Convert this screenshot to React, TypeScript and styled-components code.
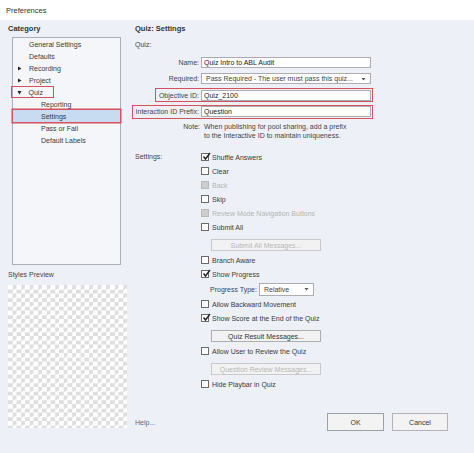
import styled, { createGlobalStyle, css } from "styled-components";

const GlobalStyle = createGlobalStyle`
  html, body {
    margin: 0;
    padding: 0;
  }
  body {
    font-family: "Liberation Sans", Arial, sans-serif;
    font-size: 7px;
    color: #333;
    background: #edf1f7;
  }
`;

const RED = "#d4505c";

const Window = styled.div`
  width: 474px;
  height: 453px;
  display: flex;
  flex-direction: column;
  background: #edf1f7;
  overflow: hidden;
`;

const TitleBar = styled.div`
  height: 20px;
  display: flex;
  align-items: center;
  padding-left: 6px;
  background: #fff;
  font-size: 7.5px;
  color: #333;
`;

const Body = styled.div`
  flex: 1;
  display: flex;
  padding-top: 4px;
`;

const LeftPane = styled.div`
  width: 119px;
  margin-left: 8px;
  display: flex;
  flex-direction: column;
`;

const SectionTitle = styled.div<{ $indent?: number }>`
  height: 10px;
  line-height: 10px;
  font-weight: bold;
  font-size: 7.5px;
  color: #333;
  padding-left: ${(p) => p.$indent ?? 0}px;
`;

const PlainLabel = styled.div<{ $top?: number; $indent?: number }>`
  height: 10px;
  line-height: 10px;
  margin-top: ${(p) => p.$top ?? 0}px;
  padding-left: ${(p) => p.$indent ?? 0}px;
  color: #444;
`;

const ListBox = styled.div`
  margin: 3px 0 0 4px;
  width: 109px;
  height: 228px;
  box-sizing: border-box;
  border: 1px solid #a9b0bc;
  background: #f4f6fa;
`;

const ItemRow = styled.div<{ $level: number; $selected?: boolean }>`
  height: 12px;
  display: flex;
  align-items: center;
  padding-left: ${(p) => 4 + p.$level * 12}px;
  color: #3a3a3a;
  ${(p) =>
    p.$selected &&
    css`
      background: #c7dbf1;
      box-shadow: 0 0 0 1.5px ${RED};
    `}
`;

const Marked = styled.span`
  display: inline-flex;
  align-items: center;
  height: 12px;
  box-sizing: border-box;
  border: 1.5px solid ${RED};
  margin-left: -6px;
  padding: 0 10px 0 4.5px;
`;

const ArrowSlot = styled.span`
  width: 12px;
  display: inline-flex;
  align-items: center;
`;

const Checker = styled.div`
  margin-top: 5px;
  width: 119px;
  height: 143px;
  background-color: #fff;
  background-image: conic-gradient(#dedede 25%, #fff 0 50%, #dedede 0 75%, #fff 0);
  background-size: 8.5px 8.5px;
`;

const RightPane = styled.div`
  flex: 1;
  margin-left: 2px;
  display: flex;
  flex-direction: column;
`;

const FormRows = styled.div`
  margin-top: 5px;
  width: 244px;
  display: flex;
  flex-direction: column;
  gap: 2.5px;
`;

const FormRow = styled.div`
  display: flex;
  justify-content: flex-end;
`;

const FieldBox = styled.div<{ $marked?: boolean }>`
  height: 14px;
  box-sizing: border-box;
  display: flex;
  align-items: center;
  gap: 2px;
  padding: 0 1px 0 3px;
  border: 1.5px solid ${(p) => (p.$marked ? RED : "transparent")};
  color: #444;
`;

const TextInput = styled.div`
  width: 170px;
  height: 11px;
  box-sizing: border-box;
  border: 1px solid #abadb3;
  background: #fff;
  padding-left: 2px;
  display: flex;
  align-items: center;
  color: #222;
`;

const Select = styled.div<{ $width: number }>`
  width: ${(p) => p.$width}px;
  height: ${(p) => (p.$width > 100 ? 11 : 13)}px;
  box-sizing: border-box;
  border: 1px solid #abadb3;
  background: #fff;
  padding: 0 4px 0 4px;
  display: flex;
  align-items: center;
  justify-content: space-between;
  color: #444;
  white-space: nowrap;
`;

const NoteRow = styled.div`
  margin-top: 3px;
  display: flex;
  line-height: 9px;
  color: #444;
`;

const NoteLabel = styled.div`
  width: 71px;
  text-align: right;
`;

const NoteText = styled.div`
  margin-left: 4px;
`;

const SettingsRow = styled.div`
  margin-top: 10.5px;
  display: flex;
`;

const SettingsLabel = styled.div`
  width: 66px;
  padding-left: 6px;
  height: 14px;
  line-height: 14px;
  color: #444;
`;

const Options = styled.div`
  display: flex;
  flex-direction: column;
`;

const OptionRow = styled.div<{ $disabled?: boolean }>`
  height: 14px;
  display: flex;
  align-items: center;
  gap: 3px;
  color: ${(p) => (p.$disabled ? "#b4b4b4" : "#3a3a3a")};
`;

const Box = styled.span<{ $disabled?: boolean }>`
  width: 8px;
  height: 8px;
  box-sizing: border-box;
  border: 1px solid ${(p) => (p.$disabled ? "#b8b8b8" : "#6a6a6a")};
  background: ${(p) => (p.$disabled ? "#cdcdcd" : "#fff")};
  position: relative;
  display: inline-block;
`;

const ButtonSlot = styled.div`
  padding: 5px 0 2px 10px;
`;

const SubButton = styled.div<{ $disabled?: boolean }>`
  width: 110px;
  height: 12px;
  box-sizing: border-box;
  border: 1px solid ${(p) => (p.$disabled ? "#cacaca" : "#adadad")};
  background: #f2f2f2;
  display: flex;
  align-items: center;
  justify-content: center;
  color: ${(p) => (p.$disabled ? "#b8b8b8" : "#333")};
`;

const ProgressRow = styled.div`
  height: 16px;
  display: flex;
  align-items: center;
  padding-left: 9px;
  gap: 2px;
  color: #444;
`;

const Footer = styled.div`
  margin-top: 22px;
  height: 18px;
  display: flex;
  align-items: center;
  padding: 0 26px 0 6px;
`;

const HelpLink = styled.span`
  color: #4d6d99;
  flex: 1;
`;

const DialogButton = styled.div<{ $default?: boolean; $width: number }>`
  width: ${(p) => p.$width}px;
  height: 18px;
  box-sizing: border-box;
  border: 1px solid ${(p) => (p.$default ? "#9aa0a8" : "#b3b3b3")};
  background: #f3f3f3;
  display: flex;
  align-items: center;
  justify-content: center;
  color: #333;
  margin-left: 8px;
`;

const Triangle = ({ dir }: { dir: "right" | "down" }) => (
  <svg width="5" height="5" viewBox="0 0 5 5">
    {dir === "right" ? (
      <path d="M1 0.5 L4.5 2.5 L1 4.5 Z" fill="#222" />
    ) : (
      <path d="M0.5 1 L4.5 1 L2.5 4.5 Z" fill="#222" />
    )}
  </svg>
);

const DropArrow = () => (
  <svg width="5" height="4" viewBox="0 0 5 4">
    <path d="M0.5 1 L4.5 1 L2.5 3.5 Z" fill="#555" />
  </svg>
);

const Tick = () => (
  <svg
    width="9"
    height="9"
    viewBox="0 0 9 9"
    style={{ position: "absolute", left: 0, top: -2 }}
  >
    <path d="M1.5 4.5 L3.5 7 L8 1" stroke="#222" strokeWidth="1.4" fill="none" />
  </svg>
);

type TreeNode = {
  label: string;
  level: number;
  arrow?: "right" | "down";
  selected?: boolean;
  marked?: boolean;
};

const tree: TreeNode[] = [
  { label: "General Settings", level: 0 },
  { label: "Defaults", level: 0 },
  { label: "Recording", level: 0, arrow: "right" },
  { label: "Project", level: 0, arrow: "right" },
  { label: "Quiz", level: 0, arrow: "down", marked: true },
  { label: "Reporting", level: 1 },
  { label: "Settings", level: 1, selected: true },
  { label: "Pass or Fail", level: 1 },
  { label: "Default Labels", level: 1 },
];

const TreeItem = ({ node }: { node: TreeNode }) => {
  const inner = (
    <>
      <ArrowSlot>{node.arrow && <Triangle dir={node.arrow} />}</ArrowSlot>
      <span>{node.label}</span>
    </>
  );
  return (
    <ItemRow $level={node.level} $selected={node.selected}>
      {node.marked ? <Marked>{inner}</Marked> : inner}
    </ItemRow>
  );
};

const Option = ({
  label,
  checked,
  disabled,
}: {
  label: string;
  checked?: boolean;
  disabled?: boolean;
}) => (
  <OptionRow $disabled={disabled}>
    <Box $disabled={disabled}>{checked && <Tick />}</Box>
    <span>{label}</span>
  </OptionRow>
);

const App = () => {
  return (
    <>
      <GlobalStyle />
      <Window>
        <TitleBar>Preferences</TitleBar>
        <Body>
          <LeftPane>
            <SectionTitle>Category</SectionTitle>
            <ListBox>
              {tree.map((n) => (
                <TreeItem key={n.label} node={n} />
              ))}
            </ListBox>
            <PlainLabel $top={5}>Styles Preview</PlainLabel>
            <Checker />
          </LeftPane>

          <RightPane>
            <SectionTitle $indent={6}>Quiz: Settings</SectionTitle>
            <PlainLabel $top={6} $indent={6}>
              Quiz:
            </PlainLabel>

            <FormRows>
              <FormRow>
                <FieldBox>
                  <span>Name:</span>
                  <TextInput>Quiz Intro to ABL Audit</TextInput>
                </FieldBox>
              </FormRow>
              <FormRow>
                <FieldBox>
                  <span>Required:</span>
                  <Select $width={170}>
                    <span>Pass Required - The user must pass this quiz...</span>
                    <DropArrow />
                  </Select>
                </FieldBox>
              </FormRow>
              <FormRow>
                <FieldBox $marked>
                  <span>Objective ID:</span>
                  <TextInput>Quiz_2100</TextInput>
                </FieldBox>
              </FormRow>
              <FormRow>
                <FieldBox $marked>
                  <span>Interaction ID Prefix:</span>
                  <TextInput>Question</TextInput>
                </FieldBox>
              </FormRow>
            </FormRows>

            <NoteRow>
              <NoteLabel>Note:</NoteLabel>
              <NoteText>
                When publishing for pool sharing, add a prefix
                <br />
                to the Interactive ID to maintain uniqueness.
              </NoteText>
            </NoteRow>

            <SettingsRow>
              <SettingsLabel>Settings:</SettingsLabel>
              <Options>
                <Option label="Shuffle Answers" checked />
                <Option label="Clear" />
                <Option label="Back" disabled />
                <Option label="Skip" />
                <Option label="Review Mode Navigation Buttons" disabled />
                <Option label="Submit All" />
                <ButtonSlot>
                  <SubButton $disabled>Submit All Messages...</SubButton>
                </ButtonSlot>
                <Option label="Branch Aware" />
                <Option label="Show Progress" checked />
                <ProgressRow>
                  <span>Progress Type:</span>
                  <Select $width={55}>
                    <span>Relative</span>
                    <DropArrow />
                  </Select>
                </ProgressRow>
                <Option label="Allow Backward Movement" />
                <Option label="Show Score at the End of the Quiz" checked />
                <ButtonSlot>
                  <SubButton>Quiz Result Messages...</SubButton>
                </ButtonSlot>
                <Option label="Allow User to Review the Quiz" />
                <ButtonSlot>
                  <SubButton $disabled>Question Review Messages...</SubButton>
                </ButtonSlot>
                <Option label="Hide Playbar in Quiz" />
              </Options>
            </SettingsRow>

            <Footer>
              <HelpLink>Help...</HelpLink>
              <DialogButton $default $width={57}>
                OK
              </DialogButton>
              <DialogButton $width={56}>Cancel</DialogButton>
            </Footer>
          </RightPane>
        </Body>
      </Window>
    </>
  );
};

export default App;
